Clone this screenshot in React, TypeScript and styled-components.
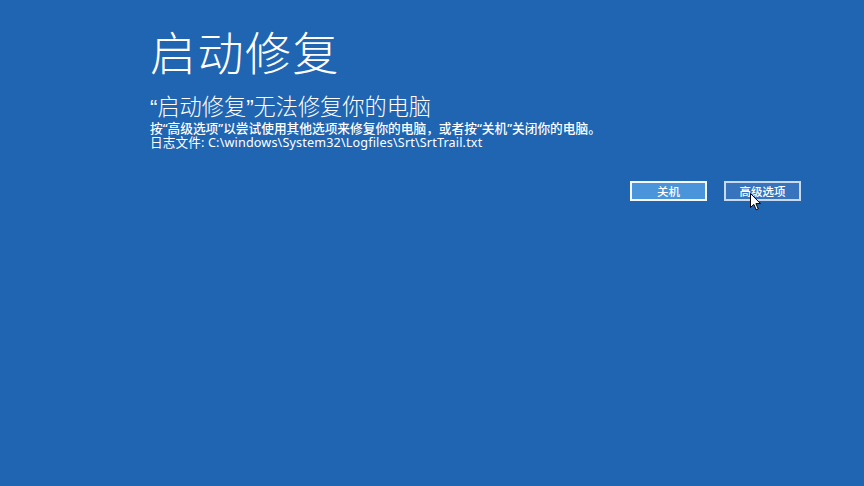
import styled, { createGlobalStyle } from 'styled-components';

const GlobalStyle = createGlobalStyle`
  html, body {
    margin: 0;
    padding: 0;
    background: #1f65b2;
  }
  body {
    font-family: "Liberation Sans", "Noto Sans CJK SC", sans-serif;
    color: #ffffff;
  }
`;

const Screen = styled.div`
  position: relative;
  width: 864px;
  height: 486px;
  overflow: hidden;
  background: #1f65b2;
  box-sizing: border-box;
  padding: 22px 63px 0 150px;
  display: flex;
  flex-direction: column;
`;

const Title = styled.h1`
  margin: 0;
  font-family: "Noto Sans CJK SC", sans-serif;
  font-weight: 300;
  font-size: 46px;
  line-height: 56px;
  letter-spacing: 1.5px;
`;

const Subtitle = styled.h2`
  margin: 17px 0 0;
  font-family: "Liberation Sans", "Noto Sans CJK SC", sans-serif;
  font-weight: 300;
  font-size: 22.2px;
  line-height: 26px;
`;

const Message = styled.p<{ $bold?: boolean }>`
  margin: ${(p) => (p.$bold ? '0' : '1px 0 0')};
  font-family: "Noto Sans", "Noto Sans CJK SC", sans-serif;
  font-weight: ${(p) => (p.$bold ? 500 : 400)};
  font-size: ${(p) => (p.$bold ? '12.7px' : '12.6px')};
  letter-spacing: ${(p) => (p.$bold ? '0' : '0.16px')};
  line-height: 14px;
  white-space: nowrap;
`;

const ButtonRow = styled.div`
  display: flex;
  justify-content: flex-end;
  gap: 17px;
  margin-top: 31px;
`;

const Button = styled.button<{ $primary?: boolean }>`
  width: 77px;
  height: 20px;
  box-sizing: border-box;
  padding: 0;
  border: 2px solid ${(p) => (p.$primary ? '#f4f8fc' : '#c9daef')};
  background: ${(p) => (p.$primary ? '#4a94da' : '#3873bd')};
  color: #ffffff;
  font-family: "Noto Sans CJK SC", sans-serif;
  font-weight: 500;
  font-size: 11.5px;
  line-height: 14px;
  cursor: default;
`;

const Pointer = styled.svg`
  position: absolute;
  left: 750px;
  top: 193px;
  width: 12px;
  height: 18px;
`;

export default function App() {
  return (
    <>
      <GlobalStyle />
      <Screen>
        <Title>启动修复</Title>
        <Subtitle>“启动修复”无法修复你的电脑</Subtitle>
        <Message $bold>按“高级选项”以尝试使用其他选项来修复你的电脑，或者按“关机”关闭你的电脑。</Message>
        <Message>日志文件: C:\windows\System32\Logfiles\Srt\SrtTrail.txt</Message>
        <ButtonRow>
          <Button $primary>关机</Button>
          <Button>高级选项</Button>
        </ButtonRow>
        <Pointer viewBox="0 0 12 18">
          <path
            d="M0.5 0.5 L0.5 14.5 L3.8 11.4 L6.2 16.8 L8.3 15.9 L5.9 10.6 L10.5 10.6 Z"
            fill="#ffffff"
            stroke="#000000"
            strokeWidth="1"
            strokeLinejoin="round"
          />
        </Pointer>
      </Screen>
    </>
  );
}
